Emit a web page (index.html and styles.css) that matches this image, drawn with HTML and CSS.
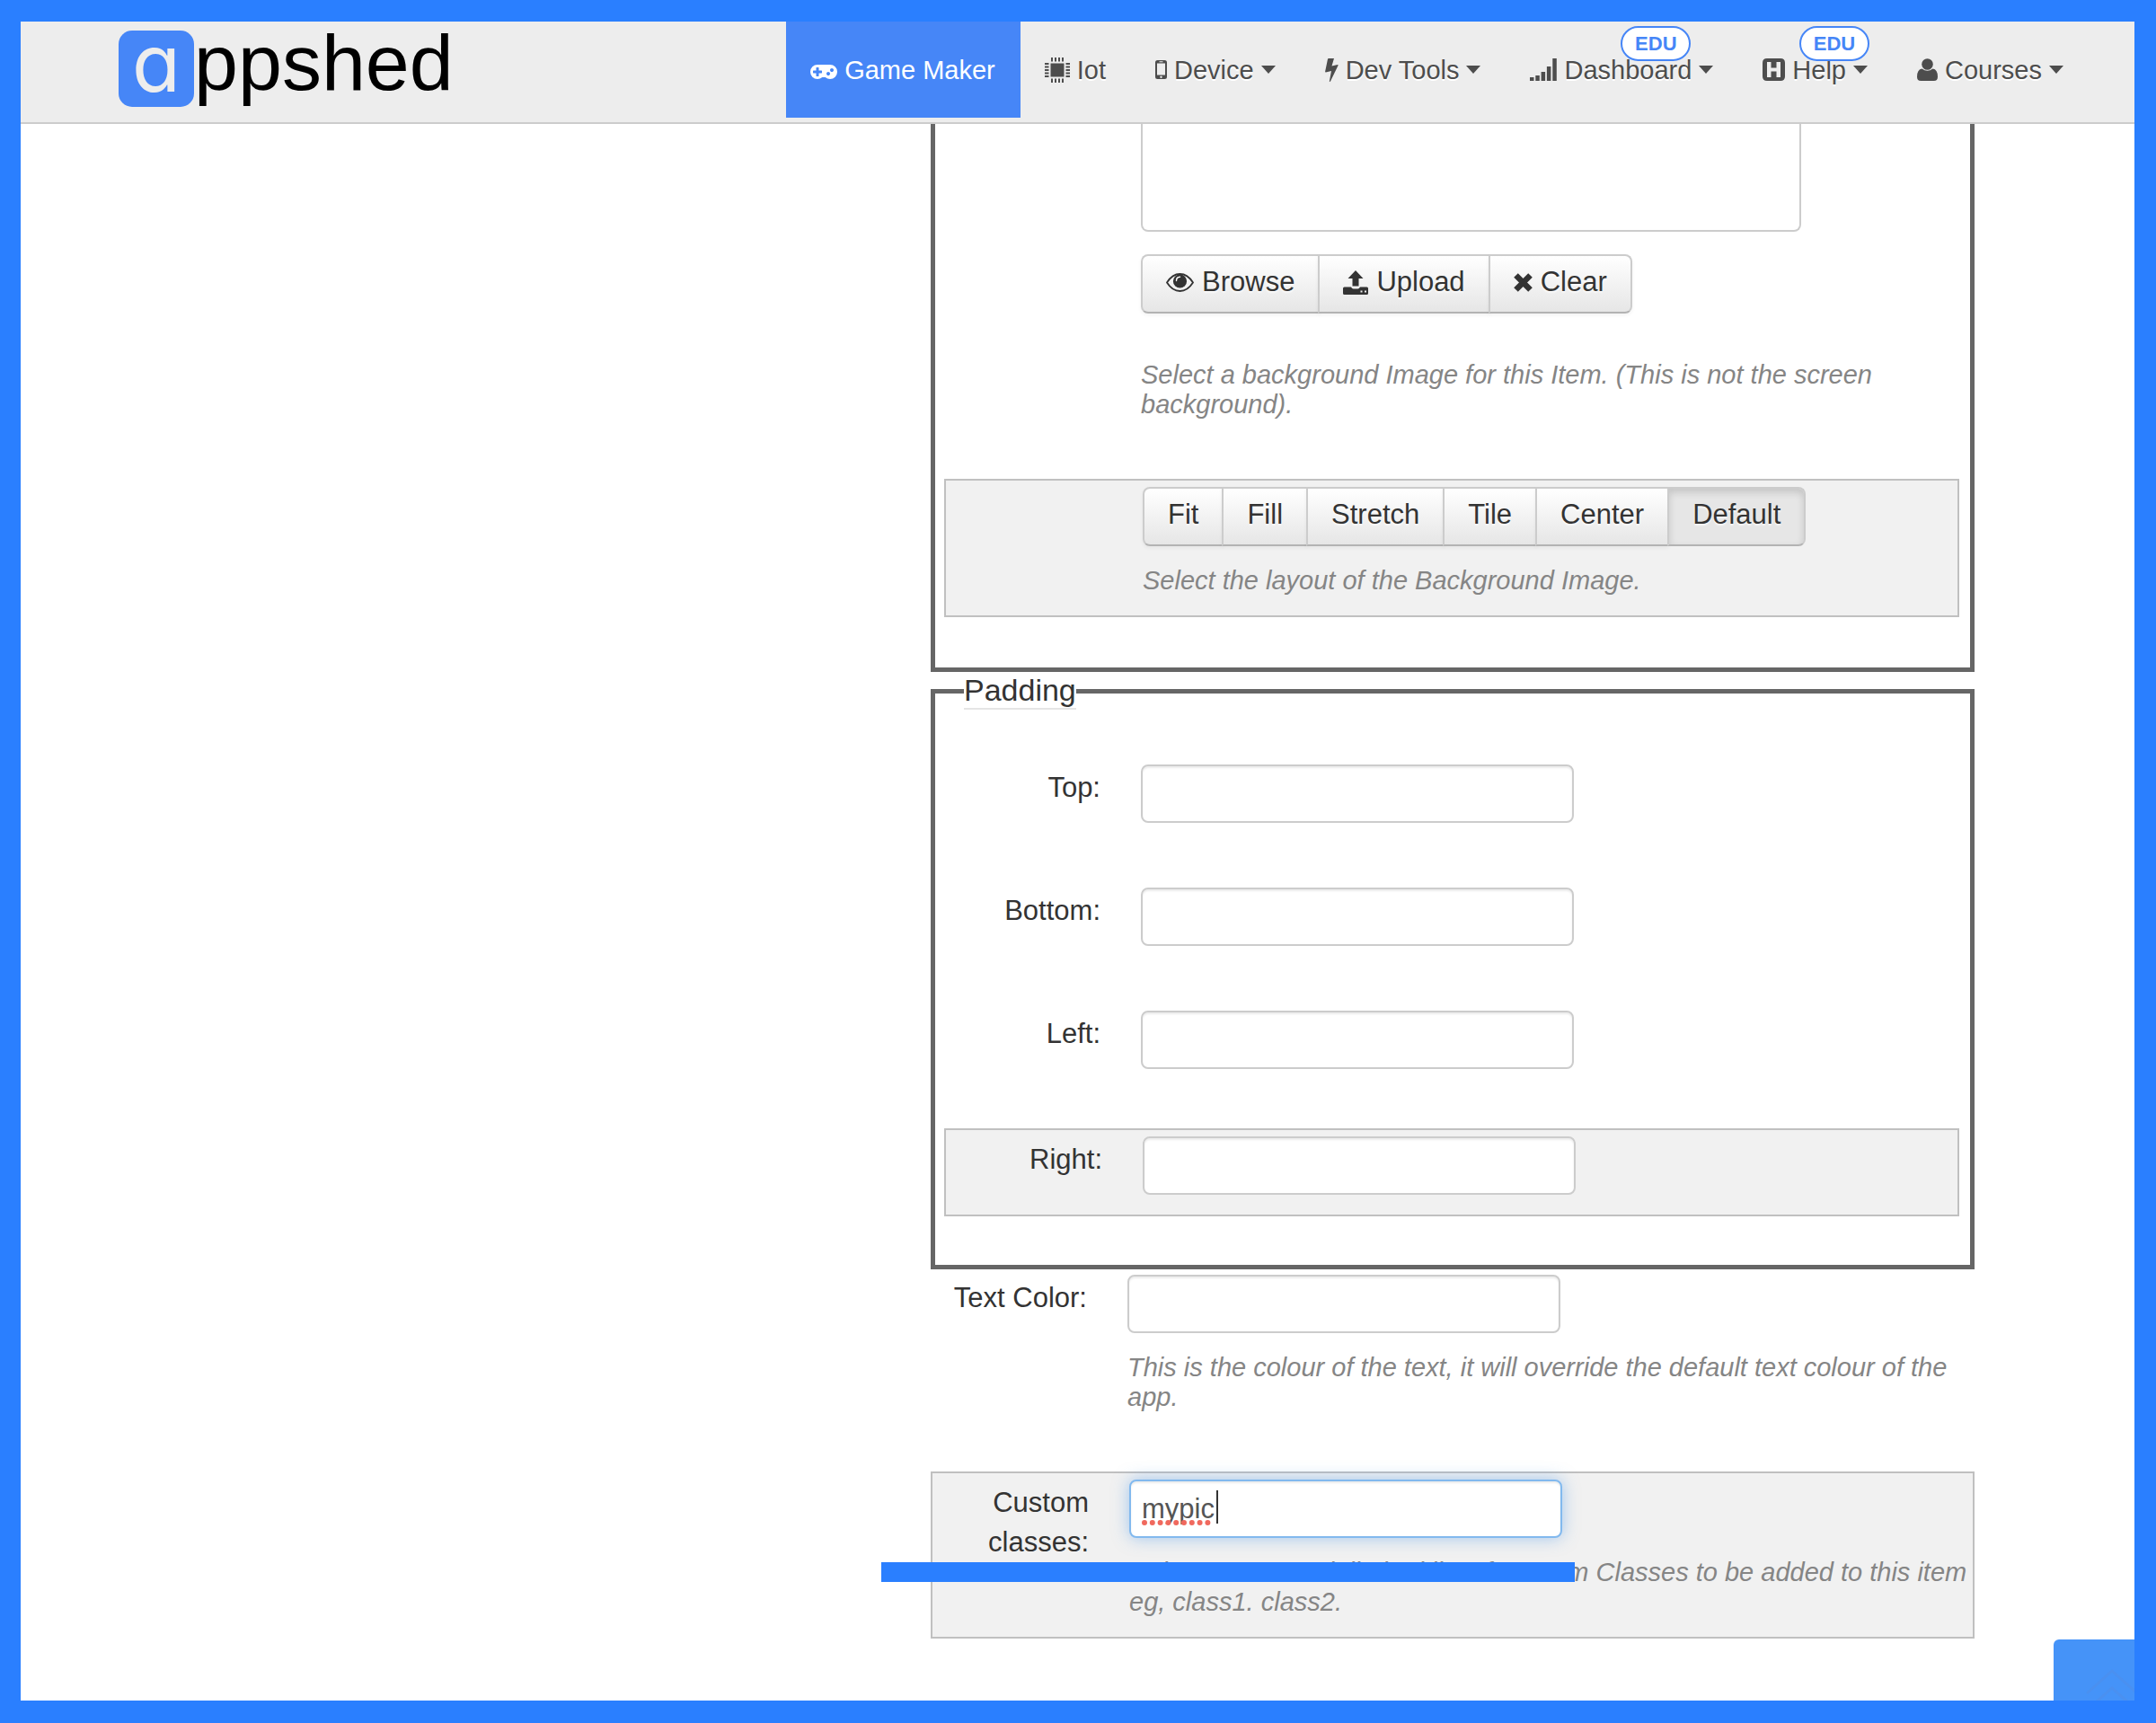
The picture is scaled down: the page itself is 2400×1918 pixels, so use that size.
FILE: index.html
```html
<!DOCTYPE html>
<html lang="en">
<head>
    <meta charset="UTF-8">
    <meta name="viewport" content="width=device-width, initial-scale=1.0">
    <title>AppShed</title>
    <link rel="stylesheet" href="styles.css">
</head>
<body>

    <header class="navbar">
        <a class="brand" href="#"><span class="brand-box">a</span><span class="brand-text">ppshed</span></a>
        <nav class="nav">
            <a class="active" href="#">
                <svg width="30" height="28" viewBox="0 0 1920 1792" fill="currentColor"><path d="M832 1088v-128q0-14-9-23t-23-9H608V736q0-14-9-23t-23-9H448q-14 0-23 9t-9 23v192H224q-14 0-23 9t-9 23v128q0 14 9 23t23 9h192v192q0 14 9 23t23 9h128q14 0 23-9t9-23v-192h192q14 0 23-9t9-23zm576 64q0-53-37.5-90.5T1280 1024t-90.5 37.5T1152 1152t37.5 90.5T1280 1280t90.5-37.5T1408 1152zm256-256q0-53-37.5-90.5T1536 768t-90.5 37.5T1408 896t37.5 90.5T1536 1024t90.5-37.5T1664 896zm256 128q0 212-150 362t-362 150q-192 0-338-128H850q-146 128-338 128-212 0-362-150T0 1024t150-362 362-150h896q212 0 362 150t150 362z"/></svg>
                Game Maker
            </a>
            <a href="#">
                <svg width="28" height="28" viewBox="0 0 28 28" fill="none" stroke="currentColor" stroke-width="2"><path fill="currentColor" stroke="none" d="M6.500 6.500h15v15h-15z"/><path d="M8 0v4.500M12 0v4.500M16 0v4.500M20 0v4.500M8 23.500v4.500M12 23.500v4.500M16 23.500v4.500M20 23.500v4.500M0 7h4.500M0 10.500h4.500M0 14h4.500M0 17.500h4.500M0 21h4.500M23.500 7h4.500M23.500 10.500h4.500M23.500 14h4.500M23.500 17.500h4.500M23.500 21h4.500"/></svg>
                Iot
            </a>
            <a href="#">
                <svg width="13" height="21" viewBox="0 0 13 21" fill="currentColor" fill-rule="evenodd"><path d="M2.500 0h8Q13 0 13 2.500v16q0 2.500-2.500 2.500h-8Q0 21 0 18.500v-16Q0 0 2.500 0zM2 3.500v13h9v-13zM4.500 1.200v1h4v-1zM6.500 17.500a1.200 1.200 0 1 0 .01 0z"/></svg>
                Device
                <svg class="caret" width="16" height="9" viewBox="0 0 16 9"><path d="M0 0h16L8 9z"/></svg>
            </a>
            <a href="#">
                <svg width="15" height="26" viewBox="0 0 15 26" fill="currentColor"><path d="M4 0h6L7.500 8.500l6.600-1.600q.8 0 .5.900L6 25.500q-.4.600-1.200.3L7 14 .9 15.600q-.9 0-.8-.9L3 .8Q3.200 0 4 0z"/></svg>
                Dev Tools
                <svg class="caret" width="16" height="9" viewBox="0 0 16 9"><path d="M0 0h16L8 9z"/></svg>
            </a>
            <a href="#">
                <svg width="30" height="25" viewBox="0 0 30 25" fill="currentColor"><path d="M0 21h4.500v4H0zM6.300 19h4.500v6H6.300zM12.600 15h4.500v10h-4.500zM18.900 9h4.500v16h-4.500zM25.300 0h4.500v25h-4.500z"/></svg>
                Dashboard
                <svg class="caret" width="16" height="9" viewBox="0 0 16 9"><path d="M0 0h16L8 9z"/></svg>
                <span class="badge badge-dashboard">EDU</span>
            </a>
            <a href="#">
                <svg width="25" height="25" viewBox="0 0 25 25" fill="currentColor" fill-rule="evenodd"><path d="M5 0h15q5 0 5 5v15q0 5-5 5H5q-5 0-5-5V5q0-5 5-5zM5 4v17h4.500v-6.500h6V21H20V4h-4.500v6.500h-6V4z"/></svg>
                Help
                <svg class="caret" width="16" height="9" viewBox="0 0 16 9"><path d="M0 0h16L8 9z"/></svg>
                <span class="badge badge-help">EDU</span>
            </a>
            <a href="#">
                <svg width="23" height="25" viewBox="0 0 23 25" fill="currentColor"><circle cx="11.500" cy="6.500" r="6.300"/><path d="M5.500 11.500q6 4.600 12 0 5.500.8 5.500 9 0 4.500-4.300 4.500H4.300Q0 25 0 20.500q0-8.200 5.500-9z"/></svg>
                Courses
                <svg class="caret" width="16" height="9" viewBox="0 0 16 9"><path d="M0 0h16L8 9z"/></svg>
            </a>
        </nav>
    </header>

    <main>
        <form class="item-form" onsubmit="event.preventDefault();">
            <fieldset class="background">
                <div class="control-group">
                    <div class="controls">
                        <textarea class="preview" aria-label="Background image"></textarea>
                        <div class="btn-group">
                            <button type="button" class="btn">
                                <svg width="31" height="21" viewBox="0 0 31 21"><path d="M1 10.500Q7 1 15.500 1T30 10.500Q24 20 15.500 20T1 10.500z" fill="none" stroke="currentColor" stroke-width="1.800"/><circle cx="15.500" cy="9" r="7.600" fill="currentColor"/><path d="M11.500 8.500q0-4 4-4.200" fill="none" stroke="#fff" stroke-width="1.400" stroke-linecap="round"/></svg>
                                Browse
                            </button>
                            <button type="button" class="btn">
                                <svg width="28" height="27" viewBox="0 0 28 27" fill="currentColor" fill-rule="evenodd"><path d="M14 0l8.500 9h-5v8.500h-7V9h-5z"/><path d="M1.500 18.500H9q1 2 2.500 2h5q1.500 0 2.500-2h7.500q1.500 0 1.500 1.500v5.500q0 1.500-1.500 1.500h-25Q0 27 0 25.500V20q0-1.500 1.500-1.500zM19.500 22.500v2h2v-2zM24 22.500v2h2v-2z"/></svg>
                                Upload
                            </button>
                            <button type="button" class="btn">
                                <svg width="21" height="21" viewBox="0 0 21 21" stroke="currentColor" stroke-width="6.500"><path d="M2.500 2.500l16 16M18.500 2.500l-16 16"/></svg>
                                Clear
                            </button>
                        </div>
                        <p class="help help-spaced">Select a background Image for this Item. (This is not the screen background).</p>
                    </div>
                </div>
                <div class="control-group highlight">
                    <div class="controls">
                        <div class="btn-group">
                            <button type="button" class="btn">Fit</button>
                            <button type="button" class="btn">Fill</button>
                            <button type="button" class="btn">Stretch</button>
                            <button type="button" class="btn">Tile</button>
                            <button type="button" class="btn">Center</button>
                            <button type="button" class="btn active">Default</button>
                        </div>
                        <p class="help">Select the layout of the Background Image.</p>
                    </div>
                </div>
            </fieldset>

            <fieldset>
                <legend>Padding</legend>
                <div class="control-group">
                    <label for="top">Top:</label>
                    <div class="controls"><input type="text" id="top" name="top"></div>
                </div>
                <div class="control-group">
                    <label for="bottom">Bottom:</label>
                    <div class="controls"><input type="text" id="bottom" name="bottom"></div>
                </div>
                <div class="control-group">
                    <label for="left">Left:</label>
                    <div class="controls"><input type="text" id="left" name="left"></div>
                </div>
                <div class="control-group highlight">
                    <label for="right">Right:</label>
                    <div class="controls"><input type="text" id="right" name="right"></div>
                </div>
            </fieldset>

            <div class="control-group">
                <label for="color">Text Color:</label>
                <div class="controls">
                    <input type="text" id="color" name="color">
                    <p class="help">This is the colour of the text, it will override the default text colour of the app.</p>
                </div>
            </div>

            <div class="control-group highlight">
                <label for="classes">Custom classes:</label>
                <div class="controls">
                    <input type="text" id="classes" class="focused" name="classes" value="mypic">
                    <!-- spelling dots and caret -->
                    <svg class="typing" width="88" height="42" viewBox="0 0 88 42"><path d="M3 37h74" stroke="#f0695e" stroke-width="6" stroke-linecap="round" stroke-dasharray="0 8.800"/><path d="M84 1v37" stroke="#333" stroke-width="2"/></svg>
                    <p class="help">A dot or comma delimited list of Custom Classes to be added to this item eg, class1. class2.</p>
                </div>
                <span class="strike"></span>
            </div>
        </form>
    </main>

    <button type="button" class="to-top" aria-label="Back to top">
        <svg width="60" height="50" viewBox="0 0 60 50" fill="none" stroke="#4a90f0" stroke-width="3"><path d="M2 28L30 3l28 25M2 47l28-25 28 25"/></svg>
    </button>

</body>
</html>
```
FILE: styles.css
```css
* {
    box-sizing: border-box;
}
body {
    position: relative;
    margin: 0;
    min-height: 100vh;
    border: 24px solid #2a7fff;
    border-width: 24px 24px 25px 23px;
    background-color: #fff;
    color: #333;
    font-family: "Liberation Sans", Arial, sans-serif;
    font-size: 31px;
    line-height: 44px;
}

/* navbar */
.navbar {
    display: flex;
    justify-content: space-between;
    align-items: flex-start;
    height: 114px;
    padding: 0 51px 0 109px;
    border-bottom: 2px solid #ccc;
    background-color: #ededed;
}
.brand {
    display: flex;
    padding-top: 10px;
    color: #000;
    text-decoration: none;
    font-size: 88px;
    line-height: 72px;
}
.brand-box {
    width: 84px;
    height: 85px;
    border-radius: 15px;
    background-color: #4686f7;
    color: #ededed;
    font-family: Inter, sans-serif;
    font-feature-settings: "cv11";
    text-align: center;
}
.nav {
    display: flex;
    font-size: 29px;

    & a {
        position: relative;
        display: flex;
        align-items: center;
        gap: 8px;
        height: 107px;
        padding: 0 28px 0 27px;
        color: #4d4d4d;
        text-decoration: none;
        text-shadow: 0 2px 0 #fff;
        white-space: nowrap;
    }
    & a.active {
        background-color: #4686f7;
        color: #fff;
        text-shadow: none;
    }
}
.caret {
    fill: currentColor;
}
.badge {
    position: absolute;
    top: 5px;
    width: 78px;
    height: 39px;
    border: 2px solid #4686f7;
    border-radius: 20px;
    background-color: #fff;
    color: #4686f7;
    font-size: 22px;
    font-weight: bold;
    line-height: 36px;
    text-align: center;
    text-shadow: none;
}
.badge-dashboard {
    right: 53px;
}
.badge-help {
    right: 26px;
}

/* form */
main {
    display: grid;
    grid-template-columns: 1013fr 1162fr 178fr;
}
.item-form {
    grid-column: 2;
}
fieldset {
    min-width: 0;
    margin: 0;
    padding: 0 12px 10px 10px;
    border: 5px solid #666;
}
fieldset.background {
    padding-bottom: 12px;
    border-top: 0;
}
legend {
    margin: 0 0 55px 22px;
    padding: 0;
    border-bottom: 2px solid #e5e5e5;
    font-size: 34px;
    line-height: 40px;
}
.control-group {
    position: relative;
    display: grid;
    grid-template-columns: 174px 1fr;
    gap: 45px;
    margin-bottom: 44px;
    padding: 6px 0 22px;

    & label {
        padding-top: 4px;
        text-align: right;
    }
}
.background .control-group:first-child {
    padding-top: 0;
}
.highlight {
    padding-top: 7px;
    border: 2px solid #c0c0c0;
    background-color: #f1f1f1;
}
.controls {
    position: relative;
    grid-column: 2;
}
input[type=text],
textarea {
    display: block;
    border: 2px solid #ccc;
    border-radius: 8px;
    background-color: #fff;
    box-shadow: inset 0 2px 2px rgba(0, 0, 0, 0.075);
    color: #555;
    font: inherit;
}
input[type=text] {
    width: 482px;
    height: 65px;
    padding: 0 12px;
}
input.focused {
    border-color: #82b9ee;
    box-shadow: inset 0 2px 2px rgba(0, 0, 0, 0.075), 0 0 18px rgba(82, 155, 236, 0.5);
}
.preview {
    width: 735px;
    height: 120px;
    margin-bottom: 25px;
    border-top: 0;
    border-radius: 0 0 8px 8px;
    box-shadow: none;
    resize: none;
}
.typing {
    position: absolute;
    top: 11px;
    left: 14px;
}
.help {
    margin: 22px 0 0;
    color: #858585;
    font-size: 29px;
    font-style: italic;
    line-height: 33px;
}
.help-spaced {
    margin-top: 52px;
}

/* buttons */
.btn-group {
    display: flex;
}
.btn {
    display: flex;
    align-items: center;
    gap: 9px;
    height: 66px;
    margin-left: -2px;
    padding: 0 26px 4px;
    border: 2px solid #ccc;
    border-bottom-color: #b3b3b3;
    background: linear-gradient(#fff, #e6e6e6);
    box-shadow: 0 2px 4px rgba(0, 0, 0, 0.05);
    color: #333;
    font: inherit;
    text-shadow: 0 2px 2px rgba(255, 255, 255, 0.75);

    &:first-child {
        margin-left: 0;
        border-radius: 8px 0 0 8px;
    }
    &:last-child {
        border-radius: 0 8px 8px 0;
    }
    &.active {
        background: #e6e6e6;
        box-shadow: inset 0 4px 8px rgba(0, 0, 0, 0.15);
    }
}

/* things over the page */
.strike {
    position: absolute;
    top: 99px;
    left: -57px;
    width: 772px;
    height: 22px;
    background-color: #2a7fff;
}
.to-top {
    position: absolute;
    right: 0;
    bottom: 0;
    width: 90px;
    height: 68px;
    padding: 0;
    border: 0;
    border-radius: 6px 0 0 0;
    background-color: #4593f8;
    overflow: hidden;

    & svg {
        display: block;
        margin: 32px 0 0 35px;
    }
}
```
